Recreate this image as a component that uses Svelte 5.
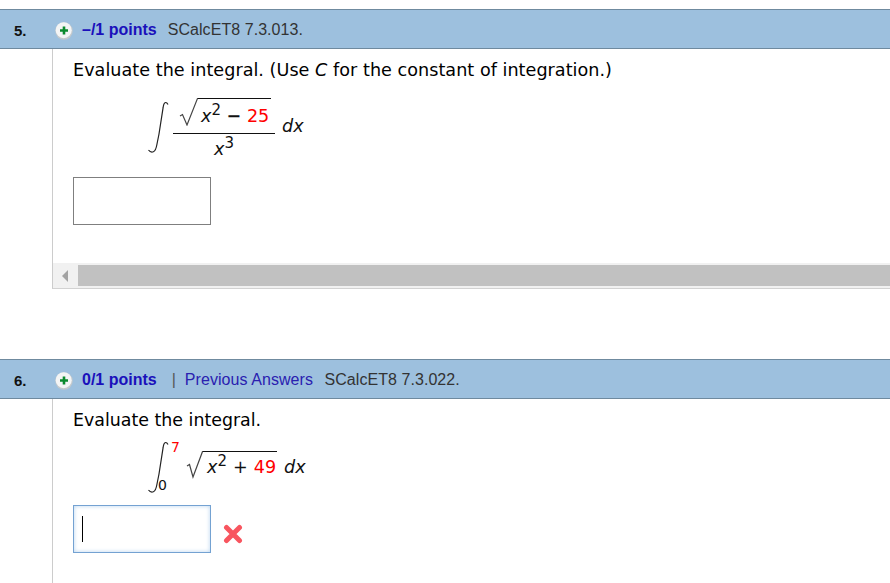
{#snippet badge()}
  <svg class="badge" width="20" height="20" viewBox="0 0 20 20" aria-hidden="true">
    <circle cx="10" cy="11" r="8.700" fill="#c4c9cc" />
    <circle cx="9.700" cy="10.200" r="8" fill="#f4f5f5" />
    <path d="M10 6.500v8M6 10.500h8" stroke="#0c8a2e" stroke-width="2.600" />
  </svg>
{/snippet}

{#snippet integral()}
  <svg class="int" width="22" height="54" viewBox="0 0 22 54" aria-hidden="true">
    <path d="M21 4.500c-.8-1.500-2-2.300-3-1.800-1.200.6-1.600 2.500-1.900 5L12 34l-2 10c-.6 3.500-1.600 7-3.600 7.800-1.600.6-3.600 0-4.900-1.800" fill="none" stroke="#222" stroke-width="1.200" />
  </svg>
{/snippet}

<main class="page">
  <section class="question first">
    <header class="bar">
      <span class="num">5.</span>
      {@render badge()}
      <strong class="pts dash">–/1 points</strong>
      <span class="ref">SCalcET8 7.3.013.</span>
    </header>
    <div class="body">
      <p class="prompt long">Evaluate the integral. (Use <i>C</i> for the constant of integration.)</p>
      <div class="math one">
        {@render integral()}
        <div class="frac">
          <div class="numer">
            <svg class="rad" width="20" height="28" viewBox="0 0 20 28" aria-hidden="true">
              <path d="M2 18l2.500-1.500L9 27 19.500.5H20" fill="none" stroke="#444" stroke-width="1.200" />
            </svg>
            <span class="under"><i>x</i><sup>2</sup><span class="op minus">−</span><span class="red">25</span></span>
          </div>
          <div class="denom"><i>x</i><sup>3</sup></div>
        </div>
        <span class="dx"><i>dx</i></span>
      </div>
      <div class="answer"><div class="box"></div></div>
      <div class="scrollbar">
        <span class="arrow"></span>
        <span class="thumb"></span>
      </div>
    </div>
  </section>

  <section class="question second">
    <header class="bar">
      <span class="num">6.</span>
      {@render badge()}
      <strong class="pts zero">0/1 points</strong>
      <span class="sep">|</span>
      <span class="prev">Previous Answers</span>
      <span class="ref">SCalcET8 7.3.022.</span>
    </header>
    <div class="body open">
      <p class="prompt short">Evaluate the integral.</p>
      <div class="math two">
        {@render integral()}
        <span class="limits"><span class="upper">7</span><span class="lower">0</span></span>
        <div class="root">
          <svg class="rad" width="18" height="28" viewBox="0 0 18 28" aria-hidden="true">
            <path d="M2 15l2.500-1.500L8 26 17.500.5H18" fill="none" stroke="#444" stroke-width="1.200" />
          </svg>
          <span class="under"><i>x</i><sup>2</sup><span class="op">+</span><span class="red">49</span></span>
        </div>
        <span class="dx"><i>dx</i></span>
      </div>
      <div class="answer row">
        <div class="box focus"><span class="caret"></span></div>
        <svg class="wrong" width="20" height="20" viewBox="0 0 20 20" aria-hidden="true">
          <path d="M3.500 3.500l13 13M16.500 3.500l-13 13" stroke="#f8555f" stroke-width="5" stroke-linecap="round" />
        </svg>
      </div>
    </div>
  </section>
</main>

<style>
  :global(body) { margin: 0; background: #fff; }
  .page { width: 890px; height: 583px; overflow: hidden; display: flex; flex-direction: column; font-family: "DejaVu Sans", Verdana, sans-serif; color: #000; }
  .question.first { margin-top: 9px; }
  .question.second { margin-top: 70px; }
  .bar { box-sizing: border-box; height: 40px; padding-top: 2px; background: #9dc0de; border-top: 1px solid #6f8a9f; border-bottom: 1px solid #6f8a9f; display: flex; align-items: center; font-family: "Liberation Sans", Arial, sans-serif; font-size: 16px; color: #333; }
  .num { width: 54px; padding-left: 14px; box-sizing: border-box; font-weight: 700; font-size: 15px; color: #111; }
  .badge { flex: none; margin-right: 8px; }
  .pts { color: #1a10bb; font-weight: 700; }
  .dash { margin-right: 11px; }
  .zero { margin-right: 15px; }
  .sep { color: #555; margin-right: 9px; }
  .prev { color: #2a20b0; margin-right: 11.500px; letter-spacing: .06px; }
  .ref { letter-spacing: .06px; }
  .body { box-sizing: border-box; margin-left: 52px; border-left: 1px solid #cccccc; padding-top: 9px; display: flex; flex-direction: column; height: 240px; border-bottom: 1px solid #d2d2d2; }
  .body.open { height: 184px; border-bottom: 0; }
  .prompt { margin: 0 0 0 20px; line-height: 24px; color: #000; }
  .long { font-size: 17.600px; letter-spacing: .03px; }
  .short { font-size: 17.400px; }
  .math { display: flex; align-items: flex-start; font-size: 17.600px; color: #111; }
  .math.one { margin: 15px 0 0 94px; height: 56px; }
  .math.two { margin: 8px 0 0 94px; height: 54px; }
  .int { flex: none; }
  .one .int { margin-top: 3px; }
  .frac { display: flex; flex-direction: column; align-items: center; margin-left: 4px; width: 102px; }
  .numer { display: flex; align-items: flex-start; width: 102px; height: 36px; padding-left: 5px; box-sizing: border-box; box-shadow: 0 1px 0 #111; }
  .root { display: flex; align-items: flex-start; margin-top: 10px; }
  .rad { flex: none; margin-top: 1px; }
  .under { display: block; white-space: nowrap; border-top: 1px solid #111; margin-top: 1px; line-height: 26px; padding: 4px 2px 0 3px; }
  .root .under { padding: 2px 1px 0 4px; }
  .denom { line-height: 26px; height: 26px; margin-top: 3px; }
  sup { font-size: 15px; line-height: 0; vertical-align: 7px; }
  .op { margin: 0 6px; }
  .minus { font-weight: 700; margin: 0 5.600px; }
  .red { color: #f00; }
  .dx { margin: 16px 0 0 7px; line-height: 26px; }
  .two .dx { margin-top: 14px; }
  .limits { display: flex; flex-direction: column; justify-content: space-between; flex: none; height: 54px; margin-top: -1px; width: 16px; font-size: 14px; line-height: 16px; }
  .upper { color: #f00; padding-left: 2px; }
  .lower { margin-left: -11px; }
  .answer { margin: 24px 0 0 20px; }
  .two + .answer { margin-top: 11px; }
  .row { display: flex; align-items: flex-start; gap: 12px; }
  .box { box-sizing: border-box; width: 138px; height: 48px; border: 1px solid #7f7f7f; background: #fff; }
  .box.focus { border-color: #74a2d2; box-shadow: inset 0 0 4px #b8d4ef; display: flex; align-items: center; padding-left: 8px; }
  .caret { width: 1px; height: 26px; background: #000; }
  .wrong { margin-top: 19px; }
  .scrollbar { margin-top: auto; height: 25px; background: #f1f1f1; display: flex; align-items: stretch; padding: 2px 0; box-sizing: border-box; }
  .arrow { align-self: center; margin: 0 10px 0 9px; width: 0; height: 0; border-top: 6px solid transparent; border-bottom: 6px solid transparent; border-right: 6px solid #a3a3a3; }
  .thumb { flex: 1; background: #c1c1c1; }
</style>
